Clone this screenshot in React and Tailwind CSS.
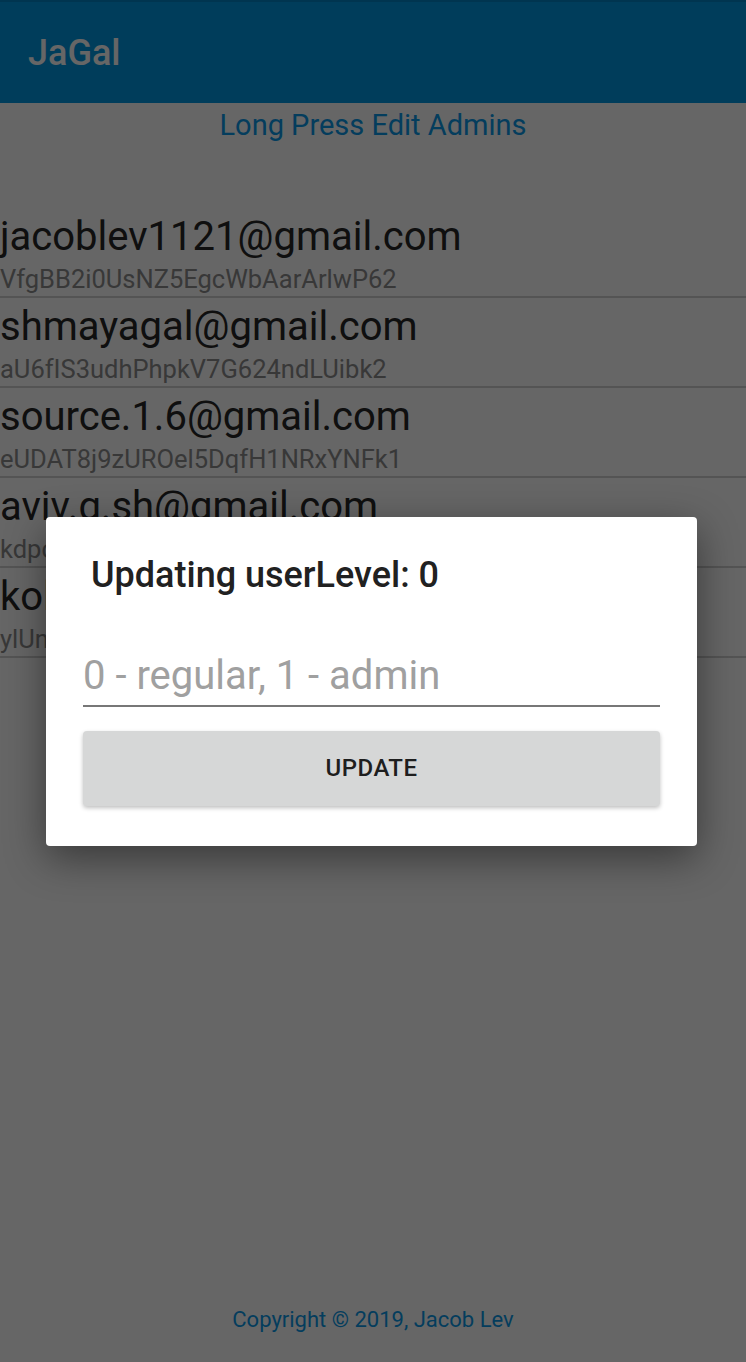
import React from 'react';

const users = [
  { email: 'jacoblev1121@gmail.com', uid: 'VfgBB2i0UsNZ5EgcWbAarArlwP62' },
  { email: 'shmayagal@gmail.com', uid: 'aU6fIS3udhPhpkV7G624ndLUibk2' },
  { email: 'source.1.6@gmail.com', uid: 'eUDAT8j9zUROel5DqfH1NRxYNFk1' },
  { email: 'aviv.g.sh@gmail.com', uid: 'kdpcQ3vT8mLx2Rw9ZbYe4HsNa7u1' },
  { email: 'kolgalit@gmail.com', uid: 'ylUnW5pKc8Xr3DqTm2VhB6sLe0j2' },
];

const App = () => {
  return (
    <div className="relative h-[1362px] flex flex-col bg-white font-['Roboto',_sans-serif] overflow-hidden">
      <header className="h-[103px] shrink-0 bg-[#0098e4] border-t-2 border-[#0086c9] flex items-center px-[28px]">
        <h1 className="text-[36px] font-medium text-white leading-none">JaGal</h1>
      </header>

      <p className="mt-[3px] text-center text-[29px] leading-[38px] text-[#0a99e8]">Long Press Edit Admins</p>

      <ul className="mt-[64px]">
        {users.map(user => (
          <li key={user.uid} className="pt-1 border-b-2 border-[#d2d2d2]">
            <div className="text-[40px] leading-[50px] text-[#262626] whitespace-nowrap">{user.email}</div>
            <div className="text-[25.5px] leading-[34px] text-[#8c8c8c] whitespace-nowrap">{user.uid}</div>
          </li>
        ))}
      </ul>

      <footer className="mt-auto pb-[27px] text-center text-[22px] leading-[30px] text-[#0a99e8]">
        Copyright © 2019, Jacob Lev
      </footer>

      {/* dialog overlay */}
      <div className="absolute inset-0 bg-black/60 flex items-center justify-center">
        <div className="w-[651px] ml-[-3px] bg-white rounded shadow-[0_12px_40px_rgba(0,0,0,0.45)] px-[37px] pt-[38px] pb-[40px]">
          <h2 className="pl-[8px] text-[36px] leading-[40px] font-medium text-[#212121]">Updating userLevel: 0</h2>
          <input
            className="mt-[52px] w-full h-[60px] border-b-2 border-[#777777] text-[40px] text-[#212121] placeholder:text-[#a0a0a0] outline-none"
            placeholder="0 - regular, 1 - admin"
          />
          <button className="mt-[24px] w-full h-[75px] bg-[#d6d7d7] rounded-sm shadow-[0_2px_4px_rgba(0,0,0,0.25)] text-[24px] font-medium tracking-[0.02em] text-[#1e1e1e]">
            UPDATE
          </button>
        </div>
      </div>
    </div>
  );
};

export default App;
